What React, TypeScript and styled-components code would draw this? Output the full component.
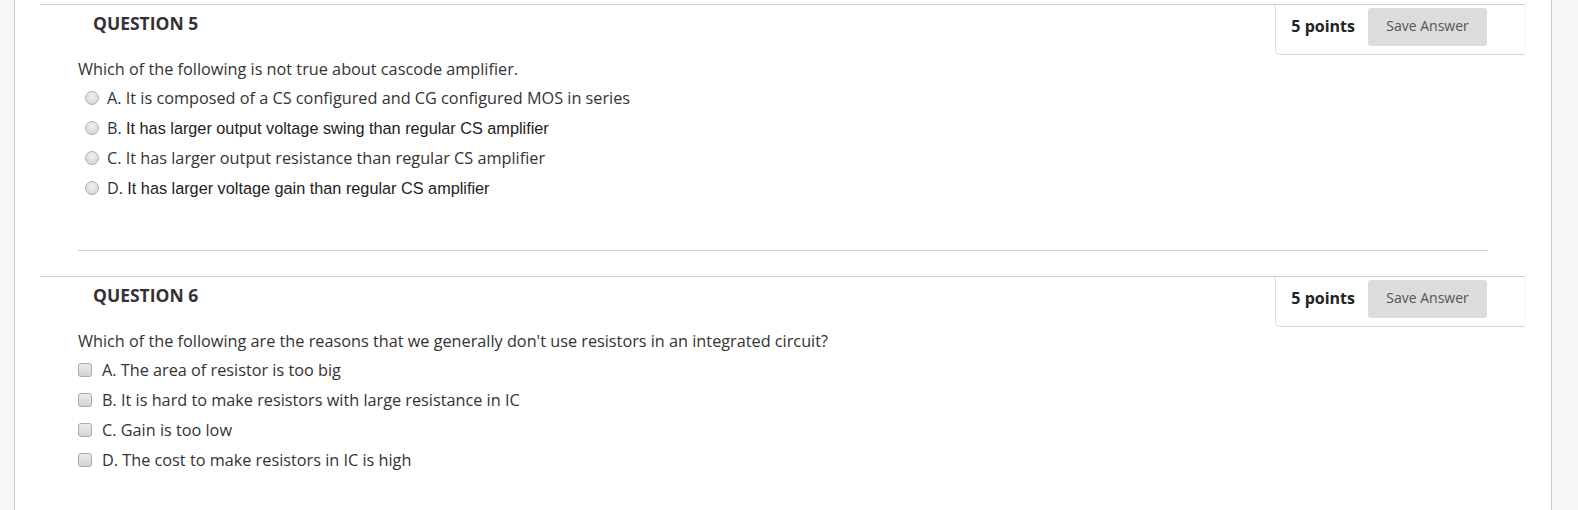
import React from "react";
import styled, { createGlobalStyle } from "styled-components";

const Global = createGlobalStyle`
  html, body { margin: 0; padding: 0; background: #f7f7f7; }
  body { font-family: "Open Sans", "Liberation Sans", sans-serif; color: #333; }
  * { box-sizing: border-box; }
`;

const Main = styled.main`
  margin-left: 14px;
  width: 1538px;
  min-height: 510px;
  background: #fff;
  border-left: 1px solid #cbcbcb;
  border-right: 1px solid #cbcbcb;
  padding: 4px 26px 0 25px;
  display: flex;
  flex-direction: column;
  gap: 25px;
`;

const Question = styled.section`
  border-top: 1px solid #cccccc;
`;

const Header = styled.div`
  display: flex;
  justify-content: space-between;
  align-items: flex-start;
`;

const Title = styled.h3`
  margin: 0;
  padding: 6px 0 0 53px;
  font-size: 17.5px;
  line-height: 24px;
  font-weight: 700;
  color: #333;
`;

const PointsBox = styled.div`
  display: flex;
  align-items: center;
  gap: 13px;
  padding: 3px 37px 8px 15px;
  border-left: 1px solid #dcdcdc;
  border-bottom: 1px solid #d6d6d6;
  border-right: 1px solid #f2f2f2;
  border-bottom-left-radius: 5px;
`;

const Points = styled.span`
  font-size: 16px;
  line-height: 20px;
  font-weight: 700;
  color: #222;
  margin-bottom: 2px;
`;

const SaveButton = styled.button`
  width: 119px;
  height: 38px;
  border: none;
  border-radius: 3px;
  background: #dcdcdc;
  color: #555;
  font-family: "Open Sans", sans-serif;
  font-size: 14px;
  line-height: 18px;
  padding: 0 0 3px 0;
`;

const Body = styled.div`
  margin: 4px 37px 0 38px;
  padding-bottom: 47px;
  border-bottom: 1px solid #d2d2d2;
`;

const Prompt = styled.p`
  margin: 0 0 4px 0;
  font-size: 16.25px;
  line-height: 20px;
  color: #333;
`;

const Options = styled.ul`
  list-style: none;
  margin: 0;
  padding: 0;
`;

const Option = styled.li<{ $indent: number }>`
  display: flex;
  align-items: center;
  height: 30px;
  padding-left: ${(p) => p.$indent}px;
  font-size: 16.25px;
  color: #333;
`;

const Radio = styled.span`
  width: 14px;
  height: 14px;
  border-radius: 50%;
  border: 1px solid #aeaeae;
  background: radial-gradient(circle at 50% 35%, #f0f0f0 0%, #dadada 70%, #cdcdcd 100%);
  margin-right: 8px;
  flex: none;
`;

const Check = styled.span`
  width: 14px;
  height: 14px;
  border-radius: 3px;
  border: 1px solid #aaaaaa;
  background: linear-gradient(#ebebeb, #d3d3d3);
  margin-right: 10px;
  flex: none;
`;

const Label = styled.span`
  white-space: pre;
`;

const Arial = styled.span`
  font-family: "Liberation Sans", Arial, sans-serif;
  font-size: 16.25px;
  color: #222;
`;

type Opt = { letter: string; text: string; arial?: boolean };

const q5: Opt[] = [
  { letter: "A.", text: "It is composed of a CS configured and CG configured MOS in series" },
  { letter: "B.", text: "It has larger output voltage swing than regular CS amplifier", arial: true },
  { letter: "C.", text: "It has larger output resistance than regular CS amplifier" },
  { letter: "D.", text: "It has larger voltage gain than regular CS amplifier", arial: true },
];

const q6: Opt[] = [
  { letter: "A.", text: "The area of resistor is too big" },
  { letter: "B.", text: "It is hard to make resistors with large resistance in IC" },
  { letter: "C.", text: "Gain is too low" },
  { letter: "D.", text: "The cost to make resistors in IC is high" },
];

function QuestionCard({
  n,
  prompt,
  options,
  kind,
}: {
  n: number;
  prompt: string;
  options: Opt[];
  kind: "radio" | "check";
}) {
  return (
    <Question>
      <Header>
        <Title>QUESTION {n}</Title>
        <PointsBox>
          <Points>5 points</Points>
          <SaveButton>Save Answer</SaveButton>
        </PointsBox>
      </Header>
      <Body>
        <Prompt>{prompt}</Prompt>
        <Options>
          {options.map((o) => (
            <Option key={o.letter} $indent={kind === "radio" ? 7 : 0}>
              {kind === "radio" ? <Radio /> : <Check />}
              <Label>
                {o.letter}{" "}
                {o.arial ? <Arial>{o.text}</Arial> : o.text}
              </Label>
            </Option>
          ))}
        </Options>
      </Body>
    </Question>
  );
}

export default function App() {
  return (
    <>
      <Global />
      <Main>
        <QuestionCard
          n={5}
          prompt="Which of the following is not true about cascode amplifier."
          options={q5}
          kind="radio"
        />
        <QuestionCard
          n={6}
          prompt="Which of the following are the reasons that we generally don't use resistors in an integrated circuit?"
          options={q6}
          kind="check"
        />
      </Main>
    </>
  );
}
